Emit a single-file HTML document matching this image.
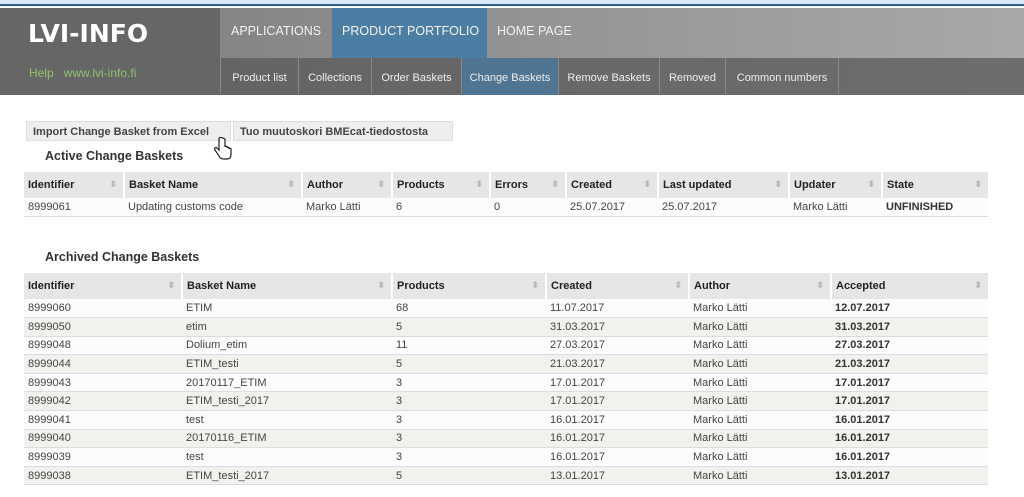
<!DOCTYPE html>
<html><head><meta charset="utf-8"><style>
*{margin:0;padding:0;box-sizing:border-box}
body{width:1024px;height:497px;overflow:hidden;background:#fff;font-family:"Liberation Sans",sans-serif;font-size:11px;color:#444;position:relative}
.topbar{position:absolute;left:0;top:0;width:1024px;height:6px;background:#dce9f6;border-bottom:2px solid #2e5f8f}
.hdr{position:absolute;left:0;top:8px;width:1024px;height:87px;background:linear-gradient(90deg,#7a7a7a 0,#8e8e8e 40%,#9c9c9c 70%,#a8a8a8 100%)}
.logoarea{position:absolute;left:0;top:8px;width:220px;height:87px;background:#666}
.logo{position:absolute;left:28px;top:19px;color:#fff;font-weight:bold;font-size:25px;font-family:"DejaVu Sans",sans-serif}
.help{position:absolute;left:29px;top:66px;color:#8fc46d;font-size:12px}
.nav{position:absolute;top:8px;height:50px;line-height:46px;color:#f2f2f2;font-size:12.5px;padding:0 10px;white-space:nowrap}
.sub{position:absolute;left:220px;top:58px;width:804px;height:37px;background:rgba(90,90,90,.75)}
.si{position:absolute;top:58px;height:37px;line-height:40px;color:#eee;font-size:11px;text-align:center;border-left:1px solid #888;white-space:nowrap}
.btn{position:absolute;top:121px;height:20px;line-height:20px;background:#eee;border:1px solid #ddd;color:#444;font-weight:bold;font-size:11px;padding:0 6px;white-space:nowrap}
h3{position:absolute;left:45px;font-size:12.5px;color:#333;font-weight:bold}
table{position:absolute;left:24px;border-collapse:collapse;table-layout:fixed}
th{background:#e6e6e6;height:26px;text-align:left;font-size:11px;color:#222;padding-left:4px;border-left:2px solid #fff;position:relative}
th:first-child{border-left:none}
th:after{content:"⬍";position:absolute;right:6px;top:7px;color:#bbb;font-size:9px}
td{padding-left:4px;font-size:11px;color:#444;border-bottom:1px solid #ddd;height:18.6px;white-space:nowrap;background:#fbfcfe}
tr.g td{background:#f2f1ee}
td b{color:#333}
</style></head><body>
<div class="topbar"></div>
<div class="hdr"></div>
<div class="logoarea"></div>
<div class="logo">LVI-INFO</div>
<div class="help">Help&nbsp;&nbsp; www.lvi-info.fi</div>
<div class="nav" style="left:220px;border-left:1px solid #888">APPLICATIONS</div>
<div class="nav" style="left:332px;width:155px;background:#4c7ea3">PRODUCT PORTFOLIO</div>
<div class="nav" style="left:487px">HOME PAGE</div>
<div class="sub"></div>
<div class="si" style="left:220px;width:78px">Product list</div>
<div class="si" style="left:298px;width:73px">Collections</div>
<div class="si" style="left:371px;width:90px">Order Baskets</div>
<div class="si" style="left:461px;width:97px;background:#4f7592">Change Baskets</div>
<div class="si" style="left:558px;width:101px">Remove Baskets</div>
<div class="si" style="left:659px;width:66px">Removed</div>
<div class="si" style="left:725px;width:114px;border-right:1px solid #888">Common numbers</div>

<div class="btn" style="left:26px;width:205px">Import Change Basket from Excel</div>
<div class="btn" style="left:233px;width:220px">Tuo muutoskori BMEcat-tiedostosta</div>
<svg style="position:absolute;left:214px;top:137px" width="20" height="24" viewBox="0 0 20 24"><path d="M5 2v11l-2-2c-1-1-3 0-2 2l4 6c1 2 2 3 5 3h3c3 0 4-2 4-5v-5c0-1-2-1-2 0v-1c0-1-2-1-2 0v-1c0-1-2-1-2 0V2C7 0 5 0 5 2z" fill="#fff" stroke="#222" stroke-width="1.2"/></svg>
<h3 style="top:149px">Active Change Baskets</h3>
<table style="top:172px;width:964px">
<colgroup><col style="width:100px"><col style="width:178px"><col style="width:90px"><col style="width:98px"><col style="width:76px"><col style="width:92px"><col style="width:131px"><col style="width:93px"><col style="width:106px"></colgroup>
<tr><th>Identifier</th><th>Basket Name</th><th>Author</th><th>Products</th><th>Errors</th><th>Created</th><th>Last updated</th><th>Updater</th><th>State</th></tr>
<tr><td>8999061</td><td>Updating customs code</td><td>Marko Lätti</td><td>6</td><td>0</td><td>25.07.2017</td><td>25.07.2017</td><td>Marko Lätti</td><td><b>UNFINISHED</b></td></tr>
</table>
<h3 style="top:250px">Archived Change Baskets</h3>
<table style="top:273px;width:964px">
<colgroup><col style="width:158px"><col style="width:210px"><col style="width:154px"><col style="width:143px"><col style="width:142px"><col style="width:157px"></colgroup>
<tr><th>Identifier</th><th>Basket Name</th><th>Products</th><th>Created</th><th>Author</th><th>Accepted</th></tr>
<tr><td>8999060</td><td>ETIM</td><td>68</td><td>11.07.2017</td><td>Marko Lätti</td><td><b>12.07.2017</b></td></tr>
<tr class="g"><td>8999050</td><td>etim</td><td>5</td><td>31.03.2017</td><td>Marko Lätti</td><td><b>31.03.2017</b></td></tr>
<tr><td>8999048</td><td>Dolium_etim</td><td>11</td><td>27.03.2017</td><td>Marko Lätti</td><td><b>27.03.2017</b></td></tr>
<tr class="g"><td>8999044</td><td>ETIM_testi</td><td>5</td><td>21.03.2017</td><td>Marko Lätti</td><td><b>21.03.2017</b></td></tr>
<tr><td>8999043</td><td>20170117_ETIM</td><td>3</td><td>17.01.2017</td><td>Marko Lätti</td><td><b>17.01.2017</b></td></tr>
<tr class="g"><td>8999042</td><td>ETIM_testi_2017</td><td>3</td><td>17.01.2017</td><td>Marko Lätti</td><td><b>17.01.2017</b></td></tr>
<tr><td>8999041</td><td>test</td><td>3</td><td>16.01.2017</td><td>Marko Lätti</td><td><b>16.01.2017</b></td></tr>
<tr class="g"><td>8999040</td><td>20170116_ETIM</td><td>3</td><td>16.01.2017</td><td>Marko Lätti</td><td><b>16.01.2017</b></td></tr>
<tr><td>8999039</td><td>test</td><td>3</td><td>16.01.2017</td><td>Marko Lätti</td><td><b>16.01.2017</b></td></tr>
<tr class="g"><td>8999038</td><td>ETIM_testi_2017</td><td>5</td><td>13.01.2017</td><td>Marko Lätti</td><td><b>13.01.2017</b></td></tr>
</table>
</body></html>
